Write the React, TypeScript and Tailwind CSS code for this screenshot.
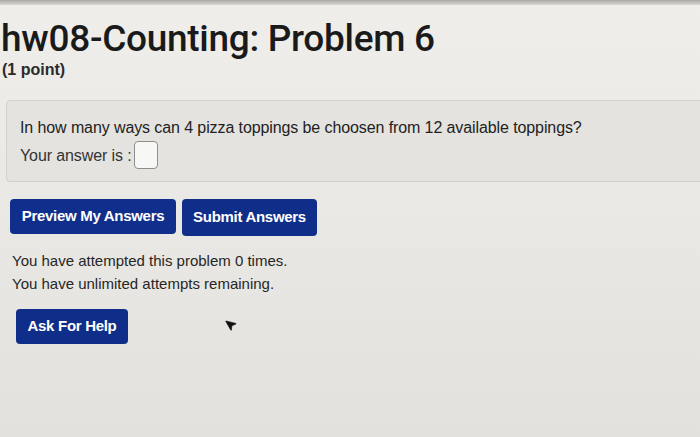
import { MousePointer2 } from "lucide-react";

export default function App() {
  return (
    <div
      className="relative w-[700px] h-[437px] overflow-hidden bg-gradient-to-b from-[#efeeeb] via-[#e9e8e4] to-[#e2e1dd] text-[#1c1c1c]"
      style={{ fontFamily: '"Liberation Sans", Arial, sans-serif' }}
    >
      {/* top edge of screen */}
      <div className="h-[5px] bg-gradient-to-b from-[#a9a9a6] to-[#d8d7d3]" />

      <div className="pl-[1px] pt-[13px]">
        <h1
          className="text-[37px] leading-[42px] font-medium tracking-[-0.3px] text-[#1a1a1a]"
          style={{ fontFamily: 'Roboto, "Liberation Sans", sans-serif' }}
        >
          hw08-Counting: Problem 6
        </h1>
        <p className="text-[16px] leading-[20px] font-bold text-[#2a2a2a] ml-[1px]">(1 point)</p>
      </div>

      {/* problem box */}
      <div className="ml-[6px] mt-[20px] mr-[-10px] h-[82px] rounded-[4px] border border-[#d2d1cd] bg-[#e4e3df] pl-[13px] pt-[16px]">
        <p className="text-[16px] leading-[21px] text-[#222] tracking-[-0.1px]">
          In how many ways can 4 pizza toppings be choosen from 12 available toppings?
        </p>
        <div className="flex items-center mt-[3px]">
          <span className="text-[16px] leading-[21px] text-[#333] tracking-[-0.1px]">Your answer is :</span>
          <span className="ml-[2px] w-[24px] h-[28px] rounded-[4px] border border-[#8e8e8c] bg-[#f7f7f5]" />
        </div>
      </div>

      {/* buttons */}
      <div className="flex gap-[6px] ml-[10px] mt-[17px]">
        <button className="w-[166px] h-[35px] rounded-[4px] bg-[#102f8c] text-white text-[15px] font-bold tracking-[-0.3px]">
          Preview My Answers
        </button>
        <button className="w-[135px] h-[37px] rounded-[4px] bg-[#0f2e8a] text-white text-[15px] font-bold tracking-[-0.3px]">
          Submit Answers
        </button>
      </div>

      <div className="ml-[12px] mt-[13px] text-[15px] leading-[23px] text-[#262626]">
        <p>You have attempted this problem 0 times.</p>
        <p>You have unlimited attempts remaining.</p>
      </div>

      <button className="ml-[16px] mt-[14px] w-[112px] h-[35px] rounded-[4px] bg-[#0f2e8a] text-white text-[15px] font-bold tracking-[-0.3px]">
        Ask For Help
      </button>

      {/* mouse cursor */}
      <MousePointer2
        className="absolute left-[224px] top-[318px] w-[14px] h-[14px] text-[#111] rotate-[-8deg]"
        fill="#111"
        strokeWidth={1}
      />
    </div>
  );
}
